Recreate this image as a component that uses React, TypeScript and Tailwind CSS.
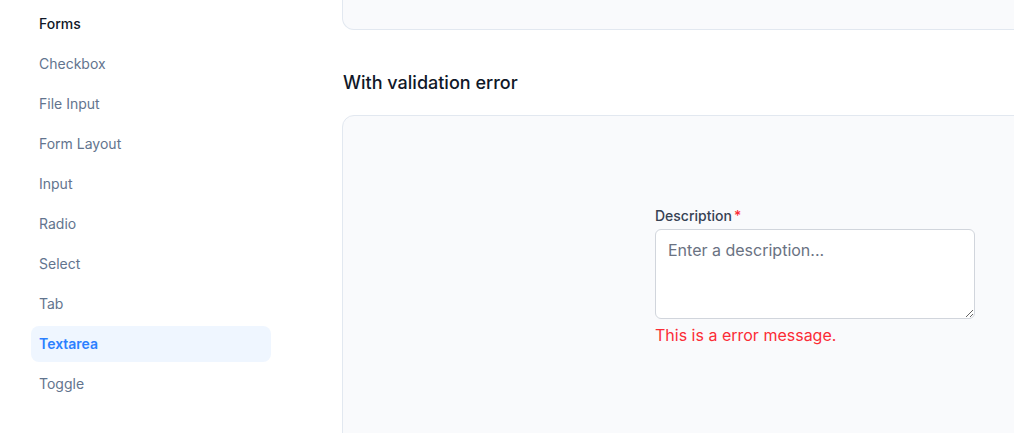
import React from "react";

const items = ["Checkbox", "File Input", "Form Layout", "Input", "Radio", "Select", "Tab", "Textarea", "Toggle"];

export default function App() {
  return (
    <div className="w-[1014px] h-[433px] overflow-hidden bg-white flex" style={{ fontFamily: "Inter, 'Noto Sans', sans-serif" }}>
      <aside className="w-[302px] shrink-0 px-[31px] pt-[6px] flex flex-col gap-1">
        <div className="h-9 flex items-center px-2 text-sm font-medium text-gray-900">Forms</div>
        {items.map((it) => (
          <div
            key={it}
            className={
              it === "Textarea"
                ? "h-9 flex items-center px-2 rounded-lg bg-blue-50 text-sm font-semibold text-blue-500"
                : "h-9 flex items-center px-2 rounded-lg text-sm text-slate-500"
            }
          >
            {it}
          </div>
        ))}
      </aside>
      <main className="flex-1 pl-[40px] flex flex-col">
        <div className="w-[946px] shrink-0 h-[31px] -mt-px rounded-b-xl border border-t-0 border-slate-200 bg-[#f9fafc]" />
        <h2 className="mt-[39px] mb-[18px] pl-px text-lg leading-7 font-medium text-gray-900">With validation error</h2>
        <div className="w-[946px] shrink-0 h-[400px] rounded-t-xl border border-slate-200 bg-[#f9fafc] flex justify-center pt-[90px]">
          <div className="w-[320px]">
            <label className="block text-sm leading-5 font-medium text-gray-700 mb-[3px]">
              Description<span className="text-red-500 ml-0.5">*</span>
            </label>
            <textarea
              className="block w-[320px] h-[90px] rounded-md border border-gray-300 bg-white px-3 py-2 text-base leading-6 text-gray-900 placeholder:text-gray-500 outline-none"
              placeholder="Enter a description..."
            />
            <p className="mt-1 text-base leading-6 text-red-500">This is a error message.</p>
          </div>
        </div>
      </main>
    </div>
  );
}
